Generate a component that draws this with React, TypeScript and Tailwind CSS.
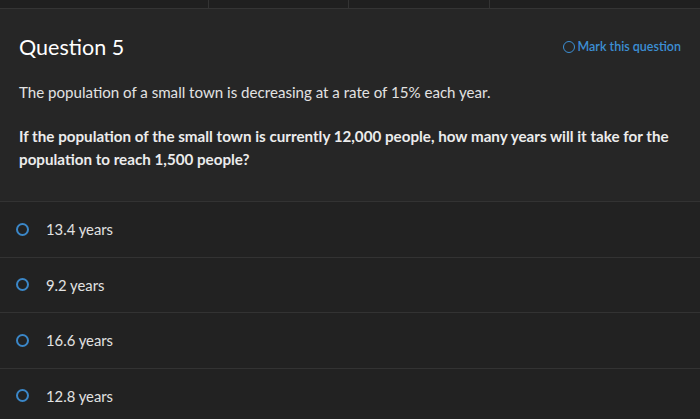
import React from "react";

const options = ["13.4 years", "9.2 years", "16.6 years", "12.8 years"];

export default function App() {
  return (
    <div
      className="w-[700px] h-[419px] overflow-hidden bg-[#262626] text-[#e6e6e6]"
      style={{ fontFamily: "Lato, 'Open Sans', sans-serif" }}
    >
      <div className="flex h-[8px] bg-[#1f1f1f] border-b border-[#343434] box-content">
        <div className="w-[209px] border-r border-[#333]" />
        <div className="w-[140px] border-r border-[#333]" />
        <div className="w-[141px] border-r border-[#333]" />
        <div className="flex-1" />
      </div>
      <div className="px-[19px] pt-[25px] h-[192px]">
        <div className="flex items-center justify-between">
          <div className="text-[21.5px] text-white leading-[26px]">Question 5</div>
          <div className="flex items-center gap-[3px] text-[12.5px] font-semibold text-[#3c8fd4]">
            <span className="w-[12px] h-[12px] rounded-full border-[1.5px] border-[#3c8fd4]" />
            Mark this question
          </div>
        </div>
        <p className="mt-[22px] text-[15.1px] leading-[20px] text-[#e2e2e2]">
          The population of a small town is decreasing at a rate of 15% each year.
        </p>
        <p className="mt-[23px] text-[15.2px] leading-[23px] font-bold text-[#ececec]">
          If the population of the small town is currently 12,000 people, how many years will it take for the
          population to reach 1,500 people?
        </p>
      </div>
      <div className="bg-[#222222]">
        {options.map((o) => (
          <div
            key={o}
            className="flex items-center h-[55.5px] border-t border-[#333333] pl-[16px]"
          >
            <span className="w-[13px] h-[13px] rounded-full border-2 border-[#3b87c8]" />
            <span className="ml-[17px] text-[14.8px] text-[#e2e2e2]">{o}</span>
          </div>
        ))}
      </div>
    </div>
  );
}
